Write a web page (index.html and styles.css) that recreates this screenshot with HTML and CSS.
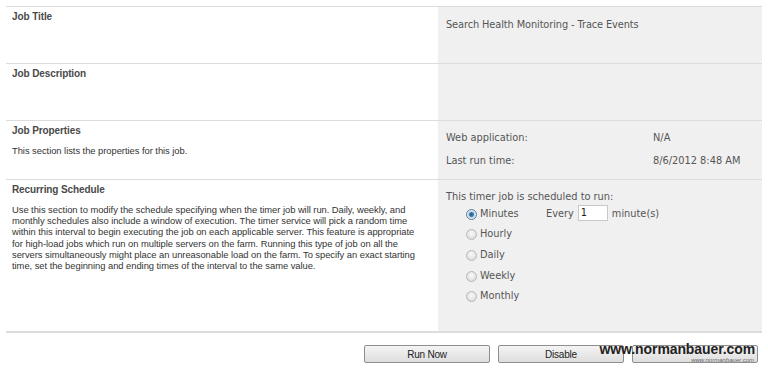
FILE: index.html
```html
<!DOCTYPE html>
<html>
<head>
<meta charset="utf-8">
<link rel="stylesheet" href="styles.css">
</head>
<body>
<div class="page">
  <div class="form">
    <div class="row r1">
      <div class="left"><div class="title">Job Title</div></div>
      <div class="right"><div class="val first">Search Health Monitoring - Trace Events</div></div>
    </div>
    <div class="row r2">
      <div class="left"><div class="title">Job Description</div></div>
      <div class="right"></div>
    </div>
    <div class="row r3">
      <div class="left">
        <div class="title">Job Properties</div>
        <div class="desc">This section lists the properties for this job.</div>
      </div>
      <div class="right props">
        <div class="prop"><span class="pk">Web application:</span><span class="pv">N/A</span></div>
        <div class="prop"><span class="pk">Last run time:</span><span class="pv">8/6/2012 8:48 AM</span></div>
      </div>
    </div>
    <div class="row r4">
      <div class="left">
        <div class="title">Recurring Schedule</div>
        <div class="desc long">Use this section to modify the schedule specifying when the timer job will run. Daily, weekly, and monthly schedules also include a window of execution. The timer service will pick a random time within this interval to begin executing the job on each applicable server. This feature is appropriate for high-load jobs which run on multiple servers on the farm. Running this type of job on all the servers simultaneously might place an unreasonable load on the farm. To specify an exact starting time, set the beginning and ending times of the interval to the same value.</div>
      </div>
      <div class="right sched">
        <div class="lead">This timer job is scheduled to run:</div>
        <div class="opts">
          <div class="radios">
            <label class="opt"><span class="radio on"></span>Minutes</label>
            <label class="opt"><span class="radio"></span>Hourly</label>
            <label class="opt"><span class="radio"></span>Daily</label>
            <label class="opt"><span class="radio"></span>Weekly</label>
            <label class="opt"><span class="radio"></span>Monthly</label>
          </div>
          <div class="every">Every <span class="box">1</span> minute(s)</div>
        </div>
      </div>
    </div>
  </div>
  <div class="buttons">
    <button class="btn">Run Now</button>
    <button class="btn">Disable</button>
    <button class="btn"></button>
    <div class="mark"><span class="big">www.normanbauer.com</span><span class="small">www.normanbauer.com</span></div>
  </div>
</div>
</body>
</html>
```
FILE: styles.css
```css
html, body { margin: 0; padding: 0; background: #fff; }
.page { padding: 6px 6px 0 6px; width: 756px; position: relative; }
.form { border-bottom: 2px solid #dcdcdc; }
.row { display: grid; grid-template-columns: 432px 324px; border-top: 1px solid #dcdcdc; }
.r1 { height: 56px; }
.r2 { height: 56px; }
.r3 { height: 58px; }
.r4 { height: 151px; }
.left { padding: 3px 12px 0 6px; font-family: "Liberation Sans", Arial, sans-serif; }
.title { font-size: 10px; font-weight: bold; color: #4a4a4a; line-height: 14px; letter-spacing: -0.1px; }
.desc { font-size: 9.4px; color: #333; line-height: 11.2px; letter-spacing: -0.04px; margin-top: 7px; }
.desc.long { margin-top: 7px; }
.right { background: #f0f0f0; padding: 0 8px; font-family: "DejaVu Sans", Verdana, sans-serif; font-size: 9.8px; color: #555; }
.val.first { padding-top: 12px; letter-spacing: -0.1px; }
.props { padding-top: 5px; }
.prop { display: flex; height: 23px; align-items: center; }
.pk { width: 207px; }
.sched { padding-top: 11px; }
.lead { line-height: 12px; }
.opts { display: flex; padding-left: 20px; }
.radios { display: flex; flex-direction: column; width: 80px; }
.opt { display: flex; align-items: center; height: 20.6px; }
.radio { width: 9px; height: 9px; border-radius: 50%; border: 1px solid #b8b8b8; background: radial-gradient(circle at 50% 40%, #fafafa, #d4d4d4); margin-right: 3px; box-sizing: content-box; position: relative; top: 1px; }
.radio.on { border-color: #5a7d9a; background: radial-gradient(circle, #2a5f8a 0, #3d7fb0 2px, #cfe1ef 3.2px, #e9f1f7 5px); }
.every { display: flex; align-items: center; height: 20px; }
.box { display: inline-block; width: 26px; height: 14px; background: #fff; border: 1px solid #c8c8c8; margin: 0 4px 0 4px; padding-left: 2px; line-height: 14px; color: #222; box-sizing: content-box; }
.buttons { display: flex; justify-content: flex-end; gap: 8px; padding: 12px 4px 0 0; position: relative; }
.btn { width: 126px; height: 18px; border: 1px solid #8e8e8e; border-radius: 2px; background: linear-gradient(#f4f4f4, #dedede); font-family: "Liberation Sans", Arial, sans-serif; font-size: 10px; color: #222; padding: 0; letter-spacing: -0.2px; }
.mark { position: absolute; right: 7px; top: 9px; display: flex; flex-direction: column; align-items: flex-end; font-family: "Liberation Sans", Arial, sans-serif; }
.mark .big { font-size: 14px; font-weight: bold; color: #222; line-height: 15px; letter-spacing: -0.1px; }
.mark .small { font-size: 6px; font-style: italic; color: #666; line-height: 6px; margin-top: 0px; margin-right: 1px; }
```
